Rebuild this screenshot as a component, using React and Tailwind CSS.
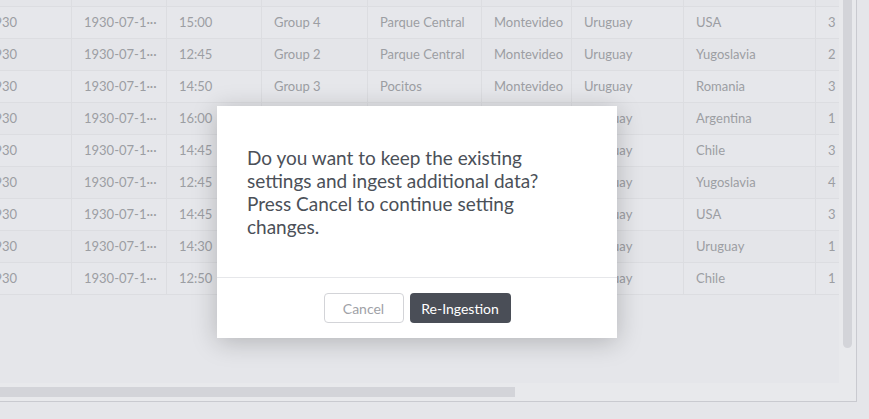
import React from 'react';

const cols = [
  { w: 97 },
  { w: 95 },
  { w: 95 },
  { w: 106 },
  { w: 114 },
  { w: 90 },
  { w: 112 },
  { w: 132 },
  { w: 60 },
];

const rows = [
  ['1930', '1930-07-1···', '13:00', 'Group 1', 'Pocitos', 'Montevideo', 'Uruguay', 'France', '4'],
  ['1930', '1930-07-1···', '15:00', 'Group 4', 'Parque Central', 'Montevideo', 'Uruguay', 'USA', '3'],
  ['1930', '1930-07-1···', '12:45', 'Group 2', 'Parque Central', 'Montevideo', 'Uruguay', 'Yugoslavia', '2'],
  ['1930', '1930-07-1···', '14:50', 'Group 3', 'Pocitos', 'Montevideo', 'Uruguay', 'Romania', '3'],
  ['1930', '1930-07-1···', '16:00', 'Group 1', 'Parque Central', 'Montevideo', 'Uruguay', 'Argentina', '1'],
  ['1930', '1930-07-1···', '14:45', 'Group 4', 'Parque Central', 'Montevideo', 'Uruguay', 'Chile', '3'],
  ['1930', '1930-07-1···', '12:45', 'Group 2', 'Parque Central', 'Montevideo', 'Uruguay', 'Yugoslavia', '4'],
  ['1930', '1930-07-1···', '14:45', 'Group 4', 'Parque Central', 'Montevideo', 'Uruguay', 'USA', '3'],
  ['1930', '1930-07-1···', '14:30', 'Group 1', 'Centenario', 'Montevideo', 'Uruguay', 'Uruguay', '1'],
  ['1930', '1930-07-1···', '12:50', 'Group 3', 'Centenario', 'Montevideo', 'Uruguay', 'Chile', '1'],
];

export default function App() {
  return (
    <div
      className="relative w-[869px] h-[419px] overflow-hidden bg-[#e5e6ea]"
      style={{ fontFamily: 'Lato, "Noto Sans", sans-serif' }}
    >
      <div className="w-[857px] h-[402px] flex flex-col border-r border-b border-[#c9cad0]">
        <div className="flex flex-1 min-h-0">
          <div className="flex-1 overflow-hidden">
            <div className="ml-[-25px] mt-[-25px] w-max">
              {rows.map((r, i) => (
                <div
                  key={i}
                  className={`flex h-[32px] border-b border-[#dcdde1] ${i % 2 ? 'bg-[#e6e7eb]' : 'bg-[#e4e5e9]'}`}
                >
                  {r.map((c, j) => (
                    <div
                      key={j}
                      style={{ width: cols[j].w }}
                      className={`shrink-0 flex items-center px-3 text-[13px] text-[#9c9ea3] whitespace-nowrap ${j < r.length - 1 ? 'border-r border-[#dcdde1]' : ''}`}
                    >
                      {c}
                    </div>
                  ))}
                </div>
              ))}
            </div>
          </div>
          <div className="w-[17px] bg-[#e8e9ec] flex justify-center">
            <div className="w-[9px] h-[348px] rounded-b-full bg-[#d3d4d9]" />
          </div>
        </div>
        <div className="h-[18px] flex">
          <div className="flex-1 bg-[#e8e9ec] flex items-center">
            <div className="w-[515px] h-[10px] bg-[#d3d4d9]" />
          </div>
          <div className="w-[17px] bg-[#e8e9ec]" />
        </div>
      </div>

      <div className="absolute left-[217px] top-[106px] w-[400px] h-[232px] bg-white shadow-[0_4px_24px_rgba(0,0,0,0.22)] flex flex-col">
        <div className="h-[172px] px-[30px] pt-[40px] border-b border-[#e6e7ea] text-[19px] leading-[23px] text-[#4b5058]">
          Do you want to keep the existing settings and ingest additional data? Press Cancel to continue setting changes.
        </div>
        <div className="flex-1 flex justify-center pt-[15px] gap-[6px]">
          <button className="w-[80px] h-[30px] border border-[#d3d4d8] rounded-sm text-[14px] text-[#a0a2a7] bg-white">
            Cancel
          </button>
          <button className="w-[101px] h-[30px] rounded-sm text-[14px] text-white bg-[#4a4e57]">
            Re-Ingestion
          </button>
        </div>
      </div>
    </div>
  );
}
